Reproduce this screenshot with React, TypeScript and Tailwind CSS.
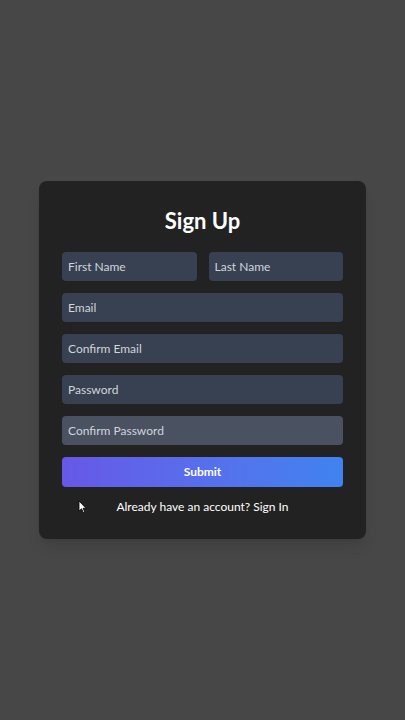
import React from "react";

const font = { fontFamily: 'Lato, "Noto Sans", sans-serif' };

const Field = ({
  placeholder,
  type = "text",
  active = false,
}: {
  placeholder: string;
  type?: string;
  active?: boolean;
}) => (
  <input
    type={type}
    placeholder={placeholder}
    className={
      "h-[29px] w-full min-w-0 rounded-[4px] px-[6px] text-[12px] text-gray-200 placeholder:text-gray-300 outline-none " +
      (active ? "bg-[#4a5262]" : "bg-[#374151]")
    }
  />
);

const App = () => {
  return (
    <div
      className="min-h-screen w-full bg-[#474747] flex items-center justify-center"
      style={font}
    >
      <form className="relative w-[327px] rounded-lg bg-[#222222] px-[23px] pt-6 pb-[22px] shadow-lg">
        <h1 className="text-center text-[22px] leading-8 font-bold text-white">
          Sign Up
        </h1>
        <div className="mt-[15px] space-y-3">
          <div className="flex gap-3">
            <Field placeholder="First Name" />
            <Field placeholder="Last Name" />
          </div>
          <Field placeholder="Email" type="email" />
          <Field placeholder="Confirm Email" type="email" />
          <Field placeholder="Password" type="password" />
          <Field placeholder="Confirm Password" type="password" active />
          <button
            type="submit"
            className="h-[30px] w-full rounded-[4px] bg-gradient-to-r from-[#6658e8] to-[#3f83f0] text-[12px] font-bold text-white"
          >
            Submit
          </button>
        </div>
        <p className="mt-[10px] text-center text-[12px] leading-5 text-white">
          Already have an account? Sign In
        </p>
        <svg
          className="absolute left-[39px] top-[319px]"
          width="9"
          height="14"
          viewBox="0 0 9 14"
        >
          <path
            d="M1 1 L1 11 L3.5 8.8 L5.4 12.6 L6.8 11.9 L5 8.3 L8 8.3 Z"
            fill="white"
            stroke="black"
            strokeWidth="0.8"
          />
        </svg>
      </form>
    </div>
  );
};

export default App;
